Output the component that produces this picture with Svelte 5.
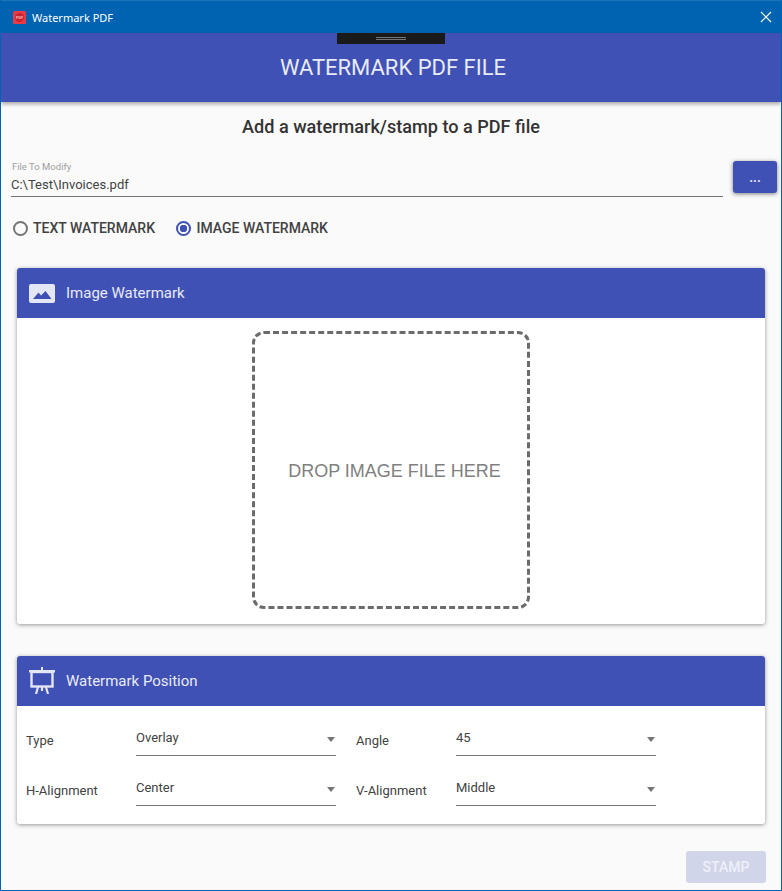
<script>
  let mode = $state('image');
</script>

<div class="window">
  <div class="titlebar">
    <svg class="app-icon" viewBox="0 0 13 13" width="13" height="13">
      <rect width="13" height="13" rx="1.5" fill="#ea3a45" />
      <circle cx="6.5" cy="6.5" r="4.6" fill="#c8242f" />
      <text x="6.5" y="8" text-anchor="middle" font-size="4" font-weight="700" fill="#f6b4b8">PDF</text>
    </svg>
    <span class="title">Watermark PDF</span>
    <svg class="close" viewBox="0 0 12 12" width="12" height="12">
      <path d="M1 1 L11 11 M11 1 L1 11" stroke="#fff" stroke-width="1.2" fill="none" />
    </svg>
  </div>

  <header class="banner">
    <div class="grip"><span></span></div>
    <h1>WATERMARK PDF FILE</h1>
  </header>

  <main>
    <h2>Add a watermark/stamp to a PDF file</h2>

    <div class="file-row">
      <div class="file-field">
        <div class="float-label">File To Modify</div>
        <div class="file-value">C:\Test\Invoices.pdf</div>
      </div>
      <button class="browse">...</button>
    </div>

    <div class="radios">
      <button class="radio" onclick={() => (mode = 'text')}>
        <span class="dot" class:on={mode === 'text'}></span>TEXT WATERMARK
      </button>
      <button class="radio" onclick={() => (mode = 'image')}>
        <span class="dot" class:on={mode === 'image'}></span>IMAGE WATERMARK
      </button>
    </div>

    <section class="card">
      <div class="card-head">
        <svg viewBox="0 0 26 19" width="26" height="19">
          <path
            d="M2 0h22a2 2 0 0 1 2 2v15a2 2 0 0 1-2 2H2a2 2 0 0 1-2-2V2a2 2 0 0 1 2-2z M4 15h18.500l-6-8-4.500 4.500-2.500-3z"
            fill="#e3e6f5"
            fill-rule="evenodd"
          />
        </svg>
        <span>Image Watermark</span>
      </div>
      <div class="drop-wrap">
        <div class="drop">DROP IMAGE FILE HERE</div>
      </div>
    </section>

    <section class="card second">
      <div class="card-head">
        <svg class="easel" viewBox="0 0 26 27" width="26" height="27">
          <rect x="12" y="0" width="2" height="4" fill="#e3e6f5" />
          <rect x="0" y="3" width="26" height="2.500" fill="#e3e6f5" />
          <rect x="2.500" y="5" width="21" height="14.500" fill="none" stroke="#e3e6f5" stroke-width="2.400" />
          <path d="M9 20 L7 27 M17 20 L19 27 M13 20 V24" fill="none" stroke="#e3e6f5" stroke-width="2.200" />
        </svg>
        <span>Watermark Position</span>
      </div>
      <div class="form">
        <div class="lbl">Type</div>
        <div class="select">Overlay<i></i></div>
        <div class="lbl">Angle</div>
        <div class="select">45<i></i></div>
        <div class="lbl">H-Alignment</div>
        <div class="select">Center<i></i></div>
        <div class="lbl">V-Alignment</div>
        <div class="select">Middle<i></i></div>
      </div>
    </section>

    <div class="actions">
      <button class="stamp" disabled>STAMP</button>
    </div>
  </main>
</div>

<style>
  :global(body) {
    margin: 0;
    background: #fafafa;
  }

  .window {
    box-sizing: border-box;
    width: 782px;
    height: 891px;
    border: 1px solid #0063b1;
    border-top: none;
    background: #fafafa;
    font-family: Roboto, sans-serif;
    color: #424242;
    overflow: hidden;
    display: flex;
    flex-direction: column;
  }

  .titlebar {
    height: 33px;
    flex-shrink: 0;
    box-sizing: border-box;
    margin: 0 -1px;
    background: #0063b1;
    border-top: 1px solid #1f74b9;
    display: flex;
    align-items: center;
    padding: 0 10px 0 13px;
    color: #fff;
    font-family: 'Noto Sans', sans-serif;
    font-size: 11px;
  }

  .title {
    margin-left: 6px;
  }

  .close {
    margin-left: auto;
  }

  .banner {
    height: 69px;
    flex-shrink: 0;
    background: #3f51b5;
    box-shadow: 0 2px 4px rgba(0, 0, 0, 0.35);
    color: #e8eaf6;
    display: flex;
    flex-direction: column;
    align-items: center;
  }

  .grip {
    width: 108px;
    height: 11px;
    background: #1a1a1a;
    display: flex;
    align-items: center;
    justify-content: center;
  }

  .grip span {
    width: 30px;
    height: 1px;
    border-top: 1px solid #777;
    border-bottom: 1px solid #777;
  }

  h1 {
    margin: 10px 0 0 4px;
    font-size: 22px;
    font-weight: 400;
    line-height: 28px;
  }

  main {
    flex: 1;
    display: flex;
    flex-direction: column;
    padding: 0 16px;
  }

  h2 {
    margin: 14px 0 0;
    font-size: 18.100px;
    line-height: 21px;
    font-weight: 500;
    text-align: center;
    color: #333;
  }

  .file-row {
    display: flex;
    align-items: flex-end;
    margin: 24px -12px 0 -6px;
    gap: 10px;
  }

  .file-field {
    flex: 1;
    box-sizing: border-box;
    height: 35px;
    border-bottom: 1px solid #757575;
  }

  .float-label {
    font-size: 9.500px;
    line-height: 12px;
    margin-top: -1px;
    padding-left: 1px;
    color: #9e9e9e;
  }

  .file-value {
    font-size: 13px;
    line-height: 20px;
    margin-top: 2px;
  }

  .browse {
    width: 44px;
    height: 32px;
    margin-bottom: 4px;
    border: none;
    border-radius: 3px;
    background: #3f51b5;
    color: #e8eaf6;
    font: 500 14px Roboto, sans-serif;
    box-shadow: 0 1px 4px rgba(0, 0, 0, 0.5);
  }

  .radios {
    display: flex;
    gap: 21px;
    margin: 22px 0 0 -4px;
  }

  .radio {
    display: flex;
    align-items: center;
    gap: 5.500px;
    padding: 0;
    border: none;
    background: none;
    font: 500 14px/18px Roboto, sans-serif;
    color: #424242;
  }

  .radio:first-child {
    gap: 5px;
  }

  .dot {
    box-sizing: border-box;
    width: 15px;
    height: 15px;
    border: 2px solid #757575;
    border-radius: 50%;
  }

  .dot.on {
    border-color: #3f51b5;
    background: radial-gradient(circle, #3f51b5 0 3.500px, transparent 4px);
  }

  .card {
    margin-top: 31px;
    background: #fff;
    border-radius: 3px;
    box-shadow: 0 1px 4px rgba(0, 0, 0, 0.4);
    overflow: hidden;
  }

  .card.second {
    margin-top: 32px;
  }

  .card-head {
    height: 50px;
    background: #3f51b5;
    color: #e8eaf6;
    display: flex;
    align-items: center;
    gap: 11px;
    padding-left: 12px;
    font-size: 15px;
    font-weight: 400;
  }

  .easel {
    margin-top: -2px;
  }

  .drop-wrap {
    display: flex;
    justify-content: center;
    padding: 13px 0 15px;
  }

  .drop {
    position: relative;
    box-sizing: border-box;
    width: 278px;
    height: 278px;
    padding: 2px 0 0 7px;
    display: flex;
    align-items: center;
    justify-content: center;
    font: 18px 'Liberation Sans', sans-serif;
    color: #808080;
  }

  .drop::before {
    content: '';
    position: absolute;
    inset: 0;
    border: 3px dashed #6b6b6b;
    border-radius: 12px;
    filter: blur(0.6px);
  }

  .form {
    display: grid;
    grid-template-columns: 110px 200px 100px 200px;
    grid-auto-rows: 50px;
    padding: 0 0 18px 9px;
    font-size: 13px;
  }

  .lbl {
    padding-top: 27px;
    line-height: 16px;
  }

  .lbl:nth-child(4n + 3) {
    margin-left: 20px;
  }

  .select {
    position: relative;
    box-sizing: border-box;
    height: 50px;
    border-bottom: 1px solid #757575;
    line-height: 16px;
    padding-top: 24px;
  }

  .select:nth-child(4n) {
    margin-left: 20px;
    margin-right: -20px;
  }

  .select i {
    position: absolute;
    right: 1px;
    top: 31px;
    border: 4px solid transparent;
    border-top: 5px solid #757575;
    border-bottom: none;
  }

  .actions {
    display: flex;
    justify-content: flex-end;
    margin: 27px -1px 0 0;
  }

  .stamp {
    width: 80px;
    height: 32px;
    border: none;
    border-radius: 3px;
    background: #d1d5ea;
    color: #eef0f8;
    font: 500 14px Roboto, sans-serif;
  }
</style>
